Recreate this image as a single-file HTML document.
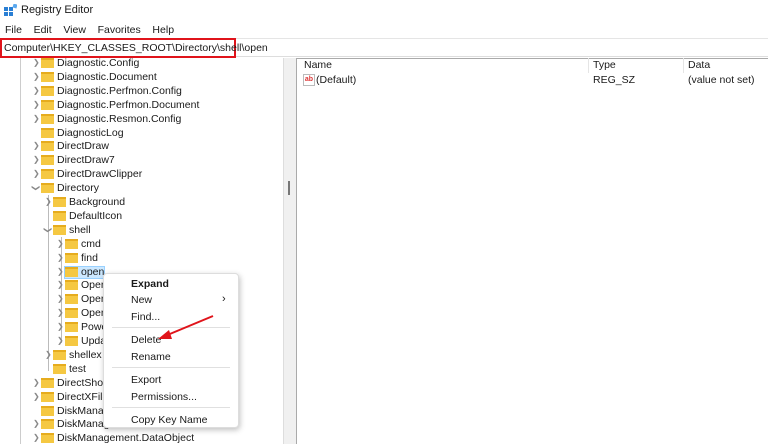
<!DOCTYPE html>
<html><head><style>
*{margin:0;padding:0;box-sizing:border-box}
body{width:768px;height:444px;overflow:hidden;background:#fff;font-family:"Liberation Sans",sans-serif;font-size:10.5px;color:#1a1a1a;position:relative}
.a{position:absolute;white-space:nowrap}
.row{position:absolute;height:14px;line-height:14px;white-space:nowrap}
.fold{position:absolute;width:13px;height:10px;top:2px;background:#f5c842;border-top:2px solid #e6ac1e}
.arr{position:absolute;top:0;color:#888;font-size:8px}
.mi{position:absolute;left:27px;font-size:10.5px}
.sep{position:absolute;left:8px;right:8px;height:1px;background:#e0e0e0}
</style></head><body>
<svg class="a" style="left:4px;top:4px" width="13" height="13"><rect x="0" y="3" width="4" height="4" fill="#2a7fd4"/><rect x="5" y="3" width="4" height="4" fill="#2a7fd4"/><rect x="0" y="8" width="4" height="4" fill="#2a7fd4"/><rect x="5" y="8" width="4" height="4" fill="#2a7fd4"/><rect x="9" y="0" width="4" height="4" fill="#5aa8ee" transform="rotate(15 11 2)"/></svg>
<div class="a" style="left:21px;top:4px;font-size:11px">Registry Editor</div>
<div class="a" style="left:5px;top:24px;font-size:10.5px">File&nbsp;&nbsp;&nbsp;&nbsp;Edit&nbsp;&nbsp;&nbsp;&nbsp;View&nbsp;&nbsp;&nbsp;&nbsp;Favorites&nbsp;&nbsp;&nbsp;&nbsp;Help</div>
<div class="a" style="left:0;top:38px;width:768px;height:19px;border-top:1px solid #e5e5e5;border-bottom:1px solid #ddd"></div>
<div class="a" style="left:0;top:38px;width:236px;height:20px;border:2px solid #e0141b"></div>
<div class="a" style="left:4px;top:42px;font-size:10.5px">Computer\HKEY_CLASSES_ROOT\Directory\shell\open</div>
<div class="a" style="left:20px;top:58px;width:1px;height:386px;background:#ccc"></div>
<div class="a" style="left:283px;top:58px;width:14px;height:386px;background:#f0f0f0;border-left:1px solid #ddd;border-right:1px solid #aaa"></div>
<div class="a" style="left:288px;top:181px;width:2px;height:14px;background:#777"></div>
<div class="a" style="left:48px;top:195px;width:1px;height:176px;background:#bbb"></div>
<div class="a" style="left:61px;top:237px;width:1px;height:106px;background:#bbb"></div>
<div id="tree"></div>
<div class="a" style="left:297px;top:58px;width:471px;height:1px;background:#aaa"></div>
<div class="a" style="left:304px;top:59px">Name</div>
<div class="a" style="left:588px;top:58px;width:1px;height:15px;background:#e5e5e5"></div>
<div class="a" style="left:593px;top:59px">Type</div>
<div class="a" style="left:683px;top:58px;width:1px;height:15px;background:#e5e5e5"></div>
<div class="a" style="left:688px;top:59px">Data</div>
<div class="a" style="left:303px;top:74px;width:12px;height:12px;border:1px solid #bbb;color:#d33;font-size:7px;font-weight:bold;line-height:9px;text-align:center">ab</div>
<div class="a" style="left:316px;top:74px">(Default)</div>
<div class="a" style="left:593px;top:74px">REG_SZ</div>
<div class="a" style="left:688px;top:74px">(value not set)</div>
<div class="a" style="left:103px;top:273px;width:136px;height:155px;background:#fff;border:1px solid #ddd;box-shadow:1px 2px 6px rgba(0,0,0,.25);border-radius:4px">
<div class="mi" style="top:4px;font-weight:bold">Expand</div>
<div class="mi" style="top:20px">New</div><div class="a" style="left:118px;top:19px;font-size:11px">›</div>
<div class="mi" style="top:37px">Find...</div>
<div class="sep" style="top:53px"></div>
<div class="mi" style="top:60px">Delete</div>
<div class="mi" style="top:77px">Rename</div>
<div class="sep" style="top:93px"></div>
<div class="mi" style="top:100px">Export</div>
<div class="mi" style="top:117px">Permissions...</div>
<div class="sep" style="top:133px"></div>
<div class="mi" style="top:140px">Copy Key Name</div>
</div>
<svg class="a" style="left:155px;top:313px" width="62" height="30"><line x1="58" y1="3" x2="10" y2="23" stroke="#e0141b" stroke-width="2"/><polygon points="3,26 14,17 17,26" fill="#e0141b"/></svg>
<script>
var rows=[["Diagnostic.Config",1,1],["Diagnostic.Document",1,1],["Diagnostic.Perfmon.Config",1,1],["Diagnostic.Perfmon.Document",1,1],["Diagnostic.Resmon.Config",1,1],["DiagnosticLog",1,0],["DirectDraw",1,1],["DirectDraw7",1,1],["DirectDrawClipper",1,1],["Directory",1,2],["Background",2,1],["DefaultIcon",2,0],["shell",2,2],["cmd",3,1],["find",3,1],["open",3,1],["Oper",3,1],["Oper",3,1],["Oper",3,1],["Powe",3,1],["Upda",3,1],["shellex",2,1],["test",2,0],["DirectShow",1,1],["DirectXFile",1,1],["DiskManag",1,0],["DiskManag",1,1],["DiskManagement.DataObject",1,1]];
var h="";rows.forEach(function(r,i){var y=56+i*13.9,x=34+(r[1]-1)*12;
if(i==15)h+='<div class="a" style="left:'+(x+6)+'px;top:'+(y+1)+'px;width:41px;height:13px;background:#cce8ff;border:1px solid #99d1ff"></div>';
h+='<div class="row" style="left:0;top:'+y+'px;width:283px">';
if(r[2]==1)h+='<span class="arr" style="left:'+(x-1)+'px">&#10095;</span>';
if(r[2]==2)h+='<span class="arr" style="left:'+(x-2)+'px;transform:rotate(90deg)">&#10095;</span>';
h+='<span class="fold" style="left:'+(x+7)+'px"></span><span style="position:absolute;left:'+(x+23)+'px">'+r[0]+'</span></div>';});
document.getElementById("tree").innerHTML=h;
</script>
</body></html>
